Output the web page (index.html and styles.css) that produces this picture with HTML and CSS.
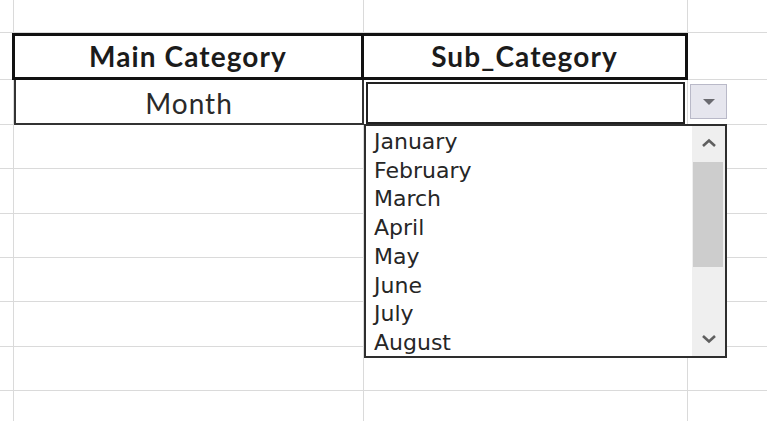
FILE: index.html
```html
<!DOCTYPE html>
<html>
<head>
<meta charset="utf-8">
<link rel="stylesheet" href="styles.css">
</head>
<body>
<div class="sheet">
  <div class="row r0"><div class="cell c0"></div><div class="cell c1"></div><div class="cell c2"></div><div class="cell c3"></div></div>
  <div class="row r1">
    <div class="cell c0"></div>
    <div class="cell c1 hdr hdr-a">Main Category</div>
    <div class="cell c2 hdr hdr-b">Sub_Category</div>
    <div class="cell c3"></div>
  </div>
  <div class="row r2">
    <div class="cell c0"></div>
    <div class="cell c1 data-a">Month</div>
    <div class="cell c2 data-b"><div class="active"></div></div>
    <div class="cell c3"></div>
  </div>
  <div class="row r44"><div class="cell c0"></div><div class="cell c1"></div><div class="cell c2"></div><div class="cell c3"></div></div>
  <div class="row r45"><div class="cell c0"></div><div class="cell c1"></div><div class="cell c2"></div><div class="cell c3"></div></div>
  <div class="row r44"><div class="cell c0"></div><div class="cell c1"></div><div class="cell c2"></div><div class="cell c3"></div></div>
  <div class="row r44"><div class="cell c0"></div><div class="cell c1"></div><div class="cell c2"></div><div class="cell c3"></div></div>
  <div class="row r45"><div class="cell c0"></div><div class="cell c1"></div><div class="cell c2"></div><div class="cell c3"></div></div>
  <div class="row r44"><div class="cell c0"></div><div class="cell c1"></div><div class="cell c2"></div><div class="cell c3"></div></div>
  <div class="row rlast"><div class="cell c0"></div><div class="cell c1"></div><div class="cell c2"></div><div class="cell c3"></div></div>

  <div class="dd-btn"><span class="tri"></span></div>

  <div class="dd-list">
    <ul class="items">
      <li>January</li>
      <li>February</li>
      <li>March</li>
      <li>April</li>
      <li>May</li>
      <li>June</li>
      <li>July</li>
      <li>August</li>
    </ul>
    <div class="scroll">
      <svg class="chev" width="16" height="10" viewBox="0 0 16 10"><path d="M2 8 L8 2.5 L14 8" fill="none" stroke="#5f5f5f" stroke-width="2.6"/></svg>
      <div class="track"><div class="thumb"></div></div>
      <svg class="chev" width="16" height="10" viewBox="0 0 16 10"><path d="M2 2 L8 7.5 L14 2" fill="none" stroke="#5f5f5f" stroke-width="2.6"/></svg>
    </div>
  </div>
</div>
</body>
</html>
```

FILE: styles.css
```css
html, body {
  margin: 0;
  padding: 0;
  background: #fff;
}
.sheet {
  position: relative;
  width: 767px;
  height: 421px;
  overflow: hidden;
  display: flex;
  flex-direction: column;
}
.row {
  display: flex;
  flex: none;
}
.r0 { height: 33px; }
.r1 { height: 47px; }
.r2 { height: 45px; }
.r44 { height: 44px; }
.r45 { height: 45px; }
.rlast { height: 40px; }
.cell {
  box-sizing: border-box;
  border-right: 1px solid #dadada;
  border-bottom: 1px solid #dadada;
  flex: none;
}
.c0 { width: 14px; }
.c1 { width: 350px; }
.c2 { width: 324px; }
.c3 { flex: 1; border-right: none; }

.hdr {
  display: flex;
  align-items: center;
  justify-content: center;
  font-family: Lato, "Open Sans", sans-serif;
  font-weight: 700;
  font-size: 28px;
  letter-spacing: 1.1px;
  color: #1b1b1b;
  border-top: 3px solid #111;
  border-bottom: 3px solid #111;
  border-right: 3px solid #111;
  padding-bottom: 2px;
}
.hdr-a {
  border-left: 3px solid #111;
  margin-left: -2px;
  width: 352px;
}
.data-a {
  display: flex;
  align-items: center;
  justify-content: center;
  font-family: Lato, "Open Sans", sans-serif;
  font-size: 28px;
  letter-spacing: 1px;
  color: #2a2a2a;
  border-left: 2px solid #333;
  border-right: 2px solid #333;
  border-bottom: 2px solid #333;
  padding-top: 2px;
}
.data-b {
  padding: 2px 2px 0 2px;
  border-bottom: none;
}
.active {
  box-sizing: border-box;
  height: 43px;
  border: 2px solid #222;
  border-bottom-width: 3px;
}

.dd-btn {
  position: absolute;
  left: 690px;
  top: 84px;
  width: 37px;
  height: 35px;
  box-sizing: border-box;
  background: #e6e6ee;
  border: 1px solid #b9b9c8;
  display: flex;
  align-items: center;
  justify-content: center;
}
.tri {
  width: 0;
  height: 0;
  border-left: 6px solid transparent;
  border-right: 6px solid transparent;
  border-top: 6px solid #6a6a70;
}

.dd-list {
  position: absolute;
  left: 364px;
  top: 124px;
  width: 363px;
  height: 234px;
  box-sizing: border-box;
  background: #fff;
  border: 2px solid #2e2e2e;
  display: flex;
  overflow: hidden;
}
.items {
  list-style: none;
  margin: 0;
  padding: 2px 0 0 8px;
  flex: 1;
  font-family: "DejaVu Sans", sans-serif;
  font-size: 22px;
  line-height: 28.7px;
  color: #262626;
}
.scroll {
  width: 33px;
  background: #efefef;
  display: flex;
  flex-direction: column;
  align-items: center;
}
.chev {
  flex: none;
  margin: 12px 0 8px;
}
.chev:last-child {
  margin: 6px 0 12px;
}
.track {
  flex: 1;
  width: 100%;
}
.thumb {
  margin-top: 6px;
  height: 105px;
  background: #cdcdcd;
  margin-left: 1px;
  margin-right: 2px;
}
```
